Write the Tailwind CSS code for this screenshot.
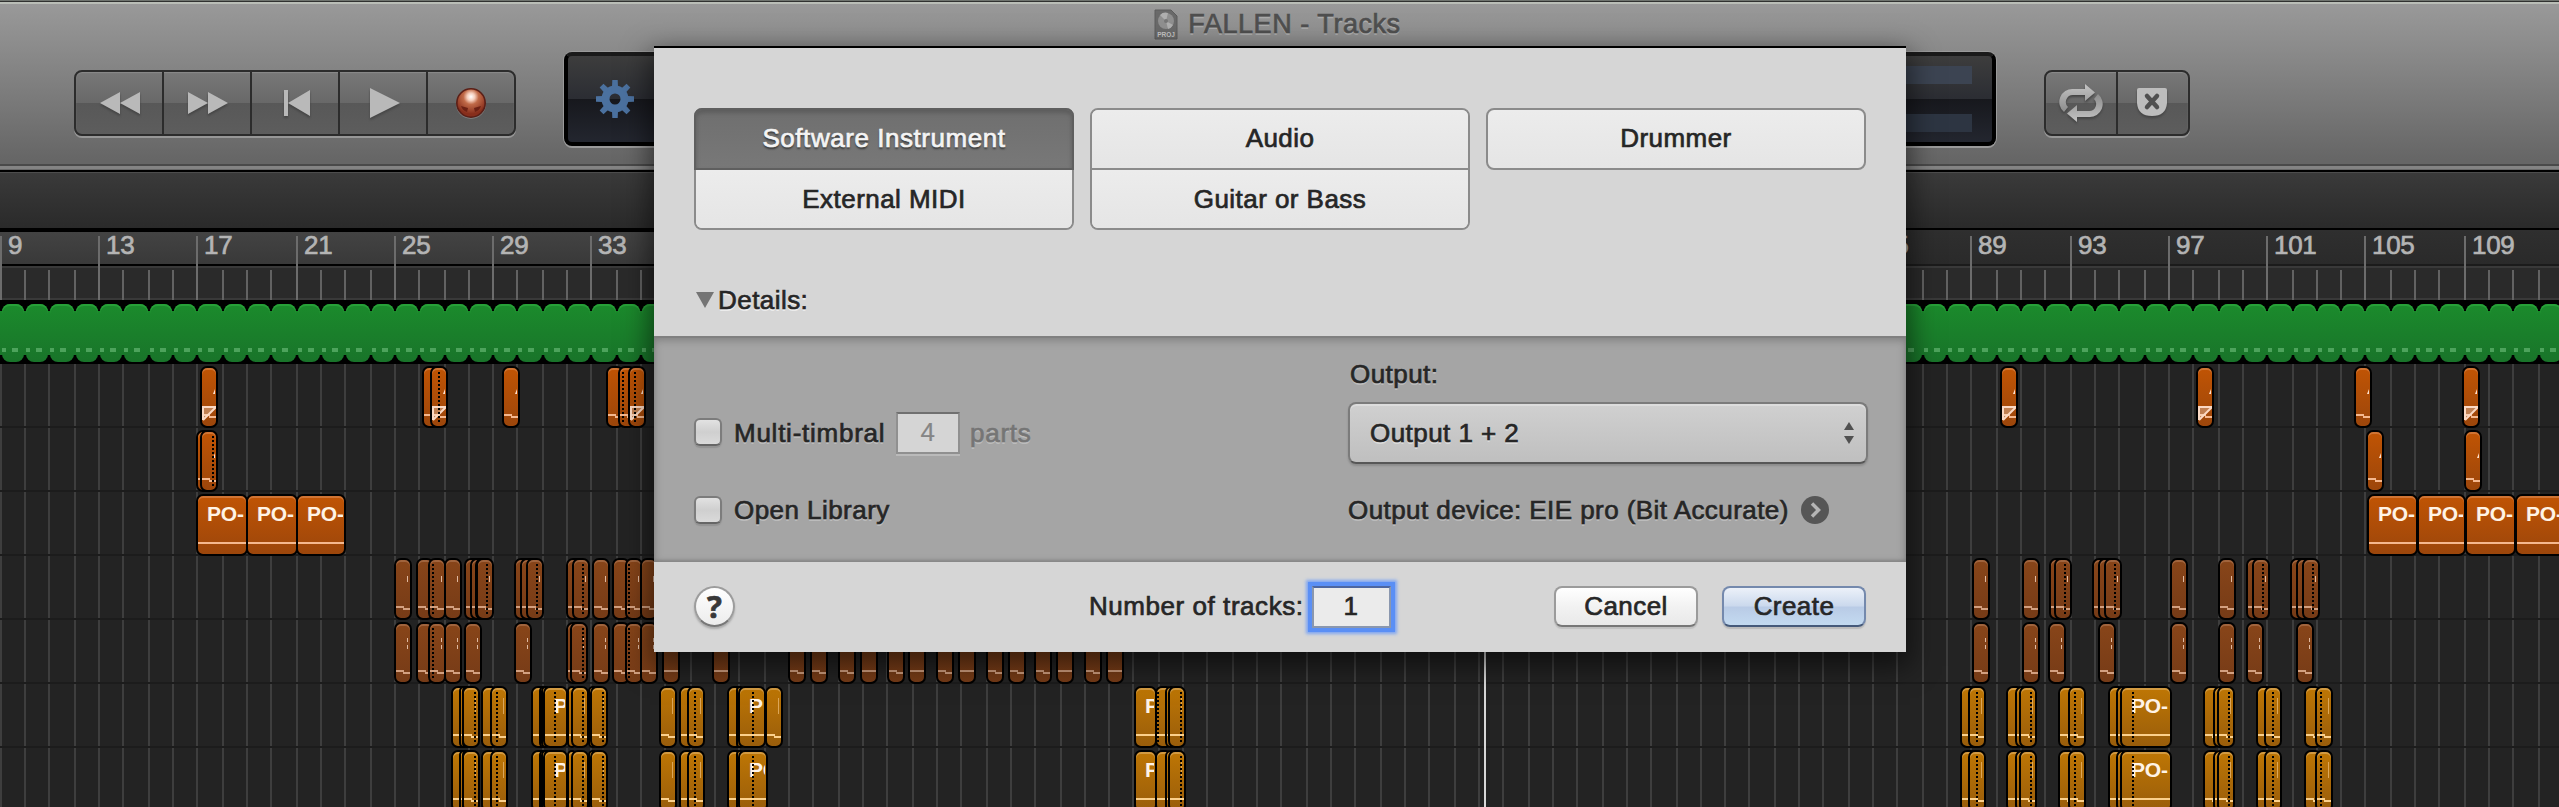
<!DOCTYPE html>
<html lang="en">
<head>
<meta charset="utf-8">
<title>FALLEN - Tracks</title>
<script src="https://cdn.jsdelivr.net/npm/@tailwindcss/browser@4"></script>
</head>
<body class="w-[2559px] h-[807px] overflow-hidden bg-[#232323]">
<div class="relative flex flex-col w-[2559px] h-[807px] overflow-hidden font-['Liberation_Sans',Arial,sans-serif] text-[26px] leading-none tracking-[0.45px] text-[#262626]">

  <!-- window header -->
  <header class="h-[172px] shrink-0 flex flex-col">
    <div class="h-[2px] bg-[linear-gradient(#8d938c,#111)]"></div>
    <div class="h-[162px] border-t-2 border-[#b9bdb6] bg-[linear-gradient(#999_0,#8b8b8b_44px,#666_155px)]">
      <div class="h-[26px] mt-[-1px] flex items-center justify-center gap-[10px] pr-[4px]">
        <svg class="w-[24px] h-[31px] mt-[16px]" viewBox="0 0 24 31">
          <path d="M1 1h16l6 6v23H1z" fill="#6a6a6a" stroke="#5c5c5c"/>
          <circle cx="12" cy="12" r="8" fill="#909090"/><path d="M12 12L6 6a8 8 0 0 1 8-2zM12 12l7 4a8 8 0 0 1-5 4z" fill="#b0b0b0"/><circle cx="12" cy="12" r="2" fill="#777"/>
          <text x="12" y="28" text-anchor="middle" font-size="6.5" font-weight="bold" letter-spacing="0" fill="#c4c4c4">PROJ</text>
        </svg>
        <span class="mt-[16px] text-[27px] tracking-[0.55px] text-[#4f4f4f] [-webkit-text-stroke:0.7px_#4f4f4f] [text-shadow:0_2px_0_#ababab]">FALLEN - Tracks</span>
      </div>
      <div class="flex items-start pl-[74px] pt-[23px]">
        <div class="mt-[18px] flex w-[442px] h-[66px] rounded-[8px] border-2 border-[#2c2c2c] bg-[linear-gradient(#787878,#686868_50%,#585858_50%,#5d5d5d)] shadow-[0_2px_0_#979797,inset_0_1px_1px_#8a8a8a]">
          <div class="w-[88px] flex items-center justify-center border-r-2 border-[#2c2c2c]">
            <svg class="w-[42px] h-[26px] ml-[2px] drop-shadow-[0_2px_1px_#444]" viewBox="0 0 42 26"><path d="M21 2v22L1 13zM41 2v22L21 13z" fill="#b9b9b9"/></svg>
          </div>
          <div class="w-[88px] flex items-center justify-center border-r-2 border-[#2c2c2c]">
            <svg class="w-[42px] h-[26px] ml-[2px] drop-shadow-[0_2px_1px_#444]" viewBox="0 0 42 26"><path d="M1 2v22l20-11zM21 2v22l20-11z" fill="#b9b9b9"/></svg>
          </div>
          <div class="w-[88px] flex items-center justify-center border-r-2 border-[#2c2c2c]">
            <svg class="w-[28px] h-[28px] ml-[4px] drop-shadow-[0_2px_1px_#444]" viewBox="0 0 28 28"><path d="M1 1h4v26H1zM27 1v26L5 14z" fill="#b9b9b9"/></svg>
          </div>
          <div class="w-[88px] flex items-center justify-center border-r-2 border-[#2c2c2c]">
            <svg class="w-[30px] h-[30px] ml-[4px] drop-shadow-[0_2px_1px_#444]" viewBox="0 0 30 30"><path d="M0 0v30l30-15z" fill="#b9b9b9"/></svg>
          </div>
          <div class="flex-1 flex items-center justify-center">
            <svg class="w-[32px] h-[32px]" viewBox="0 0 32 32">
              <defs><radialGradient id="rec" cx=".5" cy=".28" r=".6"><stop offset="0" stop-color="#fff"/><stop offset=".22" stop-color="#f5cdbb"/><stop offset=".45" stop-color="#c06a48"/><stop offset="1" stop-color="#872e1c"/></radialGradient></defs>
              <circle cx="16" cy="17" r="15" fill="#7d7d7d"/><circle cx="16" cy="16" r="14.2" fill="url(#rec)" stroke="#5a1f17" stroke-width="1.6"/>
              <path d="M6 19a10 9 0 0 0 6 6l1-4zM26 19a10 9 0 0 1-6 6l-1-4z" fill="#6c2114"/>
            </svg>
          </div>
        </div>
        <div class="ml-[48px] w-[1432px] h-[94px] rounded-[8px] border-4 border-black border-t-[#1a1a1a] bg-[linear-gradient(#3d3d3d,#2b2d33_50%,#17181d_50%,#23262f)] shadow-[0_0_0_1px_#9a9a9a,0_2px_0_#9a9a9a] flex justify-between">
          <svg class="w-[40px] h-[40px] ml-[27px] mt-[23px]" viewBox="-20 -20 40 40" fill="#4b719f">
            <path fill-rule="evenodd" d="M0-13.500A13.500 13.500 0 1 1 0 13.500A13.500 13.500 0 1 1 0-13.500zM0-5.500A5.500 5.500 0 1 0 0 5.500A5.500 5.500 0 1 0 0-5.500z"/>
            <g id="t"><path d="M-3-12l.3-7h5.400l.3 7zM-3 12l.3 7h5.400l.3-7zM-12-3l-7 .3v5.400l7 .3zM12-3l7 .3v5.400l-7 .3z"/></g><use href="#t" transform="rotate(45)"/>
          </svg>
          <div class="flex flex-col gap-[30px] mt-[10px] mr-[20px]">
            <div class="w-[110px] h-[18px] bg-[#3c4452]"></div>
            <div class="w-[110px] h-[18px] bg-[#2d3542]"></div>
          </div>
        </div>
        <div class="ml-[48px] mt-[18px] flex w-[146px] h-[66px] rounded-[8px] border-2 border-[#2c2c2c] bg-[linear-gradient(#787878,#686868_50%,#585858_50%,#5d5d5d)] shadow-[0_2px_0_#979797,inset_0_1px_1px_#8a8a8a]">
          <div class="w-[72px] flex items-center justify-center border-r-2 border-[#2c2c2c]">
            <svg class="w-[44px] h-[40px] drop-shadow-[0_2px_1px_#444]" viewBox="0 0 44 40">
              <defs><linearGradient id="a1" x1="0" y1="0" x2="0" y2="1"><stop offset="0" stop-color="#c4c4c4"/><stop offset="1" stop-color="#8c8c8c"/></linearGradient><linearGradient id="a2" x1="0" y1="0" x2="0" y2="1"><stop offset="0" stop-color="#8c8c8c"/><stop offset="1" stop-color="#c4c4c4"/></linearGradient></defs>
              <path d="M26 1v5H14A13 13 0 0 0 5 29l4-5A7 7 0 0 1 14 12h12v6l10-8.500z" fill="url(#a1)"/>
              <path d="M18 39v-5h12a13 13 0 0 0 9-23l-4 5a7 7 0 0 1-5 12H18v-6L8 30.500z" fill="url(#a2)"/>
            </svg>
          </div>
          <div class="flex-1 flex items-center justify-center pr-[2px]">
            <svg class="w-[32px] h-[30px] drop-shadow-[0_2px_1px_#444]" viewBox="0 0 32 30"><path d="M3 0h26q2 0 2 2v13q-1 13-15 13T1 15V2q0-2 2-2z" fill="#bdbdbd"/><path d="M11 8l10 11M21 8L11 19" stroke="#505050" stroke-width="4.500" stroke-linecap="round"/></svg>
          </div>
        </div>
      </div>
    </div>
    <div class="h-[2px] bg-[#4a4a4a]"></div>
    <div class="h-[4px] bg-[#848484] border-b border-[#6a6a6a]"></div>
    <div class="h-[2px] bg-black"></div>
  </header>

  <div class="h-[56px] shrink-0 border-t border-[#4d4d4d] bg-[linear-gradient(#3a3a3a,#2a2a2a)]"></div>

  <!-- bar ruler -->
  <section class="relative h-[76px] shrink-0 flex flex-col overflow-hidden">
    <div class="flex h-[38px]">
      <div class="w-[1280px] border-t-4 border-b-2 border-black bg-[linear-gradient(#434343,#393939)]"></div>
      <div class="flex-1 border-t-2 border-b-2 border-t-black border-b-[#1b1b1b] bg-[linear-gradient(#2f2f2f,#2a2a2a)]"></div>
    </div>
    <div class="h-[34px] bg-[#2a2a2a] border-t-2 border-b-2 border-[#393939]"></div>
    <div class="h-[4px] bg-black"></div>
    <div id="minor" class="absolute left-0 top-[42px] h-[30px] flex"></div>
    <div id="major" class="absolute left-0 top-[8px] h-[64px] flex text-[#b4b4b4]"></div>
  </section>

  <!-- arrange area -->
  <main id="area" class="relative flex-1 overflow-hidden bg-[#232323]">
    <div id="grid" class="absolute left-0 top-0 h-full flex"></div>
    <div id="seps" class="absolute left-0 top-[60px] w-full flex flex-col"></div>
    <div class="absolute left-0 top-0 w-full h-[60px] bg-black"></div>
    <div class="absolute left-0 top-0 w-full h-[58px] [clip-path:inset(7px_0)] bg-[linear-gradient(#1b8b2c,#19742a)]"></div>
    <div id="green" class="absolute left-0 top-0 h-[58px] flex"></div>
    <div class="absolute left-[1484px] top-0 w-[2px] h-full bg-[#d8d8d8]"></div>
  </main>

  <!-- new tracks dialog -->
  <div role="dialog" class="absolute left-[654px] top-[46px] w-[1252px] h-[606px] flex flex-col border-t-2 border-black bg-[#d6d6d6] shadow-[0_10px_26px_4px_rgba(0,0,0,0.55)] [-webkit-text-stroke:0.7px_currentColor]">
    <div class="h-[288px] shrink-0 pl-[40px] pt-[60px]">
      <div class="flex items-start gap-[16px]">
        <div class="w-[380px] h-[122px] rounded-[8px] border-2 border-[#8b8b8b] bg-[#e8e8e8] text-center">
          <div class="h-[62px] -mt-[2px] -mx-[2px] rounded-t-[8px] border-2 border-[#5f5f5f] bg-[linear-gradient(#6f6f6f,#787878)] shadow-[inset_0_3px_4px_#5c5c5c] leading-[57px] tracking-[0.55px] text-[#f4f4f4] [text-shadow:0_2px_2px_#333]">Software Instrument</div>
          <div class="h-[58px] rounded-b-[6px] bg-[linear-gradient(#ececec,#e5e5e5)] leading-[58px]">External MIDI</div>
        </div>
        <div class="w-[380px] h-[122px] rounded-[8px] border-2 border-[#8b8b8b] bg-[#e8e8e8] text-center">
          <div class="h-[60px] rounded-t-[6px] border-b-2 border-[#8b8b8b] bg-[linear-gradient(#ececec,#e5e5e5)] leading-[57px]">Audio</div>
          <div class="h-[58px] rounded-b-[6px] bg-[linear-gradient(#ececec,#e5e5e5)] leading-[58px]">Guitar or Bass</div>
        </div>
        <div class="w-[380px] h-[62px] rounded-[8px] border-2 border-[#8b8b8b] bg-[linear-gradient(#ececec,#e5e5e5)] text-center leading-[57px]">Drummer</div>
      </div>
      <div class="mt-[55px] flex items-center gap-[4px] pl-[2px] h-[30px]">
        <svg class="w-[18px] h-[16px]" viewBox="0 0 18 16"><path d="M0 0h18L9 16z" fill="#757575"/></svg>
        <span class="[text-shadow:0_2px_0_#ececec]">Details:</span>
      </div>
    </div>

    <div class="h-[226px] shrink-0 flex bg-[#a5a5a5] border-t-2 border-[#808080] shadow-[inset_0_2px_8px_#7d7d7d,inset_0_-2px_3px_#8a8a8a] pl-[40px] [text-shadow:0_2px_0_#bcbcbc]">
      <div class="w-[654px] flex flex-col pt-[74px]">
        <div class="flex items-center h-[42px]">
          <span class="size-[28px] -mt-[2px] rounded-[6px] border-2 border-[#7c7c7c] border-b-[#666] bg-[linear-gradient(#e2e2e2,#cfcfcf_50%,#dadada)] shadow-[0_2px_1px_#939393]"></span>
          <span class="ml-[12px] w-[154px] -mt-[1px] tracking-[0.75px]">Multi-timbral</span>
          <span class="ml-[8px] w-[64px] h-[42px] border-2 border-[#909090] border-t-[#707070] bg-[#d5d5d5] shadow-[0_2px_0_#bababa] text-center leading-[37px] text-[#858585] [text-shadow:none] [-webkit-text-stroke:0.2px_#858585]">4</span>
          <span class="ml-[10px] -mt-[1px] text-[#757575] tracking-[0.75px]">parts</span>
        </div>
        <div class="flex items-center h-[28px] mt-[42px]">
          <span class="size-[28px] rounded-[6px] border-2 border-[#7c7c7c] border-b-[#666] bg-[linear-gradient(#e2e2e2,#cfcfcf_50%,#dadada)] shadow-[0_2px_1px_#939393]"></span>
          <span class="ml-[12px]">Open Library</span>
        </div>
      </div>
      <div class="flex flex-col pt-[21px]">
        <div class="h-[30px] leading-[30px] pl-[2px]">Output:</div>
        <div class="mt-[13px] w-[520px] h-[62px] rounded-[8px] border-2 border-[#7b7b7b] border-b-[#575757] bg-[linear-gradient(#d0d0d0,#bfbfbf)] shadow-[0_2px_2px_#8c8c8c,inset_0_2px_0_#dcdcdc] flex items-center justify-between pl-[20px] pr-[12px] [text-shadow:0_2px_0_#dadada]">
          <span class="-mt-[1px]">Output 1 + 2</span>
          <svg class="w-[10px] h-[22px]" viewBox="0 0 10 22"><path d="M0 8h10L5 0zM0 14h10l-5 8z" fill="#505050"/></svg>
        </div>
        <div class="flex items-center h-[28px] mt-[32px]">
          <span class="tracking-[0.43px]">Output device: EIE pro (Bit Accurate)</span>
          <svg class="ml-[12px] w-[28px] h-[28px]" viewBox="0 0 28 28"><circle cx="14" cy="14" r="14" fill="#565656"/><path d="M11 7.500l6.500 6.500-6.500 6.500" fill="none" stroke="#b5b5b5" stroke-width="3.500"/></svg>
        </div>
      </div>
    </div>

    <div class="flex-1 flex items-start pl-[40px] pr-[40px] pt-[24px]">
      <span class="size-[41px] rounded-full border-2 border-[#9c9c9c] border-b-[#777] bg-[linear-gradient(#fff,#ececec)] shadow-[0_2px_2px_#aaa] text-center font-['Noto_Sans',sans-serif] font-bold text-[31px] leading-[37px] text-[#383838]">?</span>
      <span class="ml-[354px] h-[41px] leading-[40px] tracking-[0.55px]">Number of tracks:</span>
      <span class="ml-[8px] w-[79px] h-[42px] border-2 border-[#8a97ae] border-t-[#4d66a0] bg-[#ebebeb] shadow-[0_0_0_4px_#5a8ff5,0_0_3px_6px_#7fa6f2] text-center leading-[37px]">1</span>
      <span class="ml-auto w-[144px] h-[41px] rounded-[8px] border-2 border-[#9b9b9b] border-b-[#777] bg-[linear-gradient(#fff,#f2f2f2_50%,#e9e9e9)] shadow-[0_2px_1px_#c0c0c0] text-center leading-[37px]">Cancel</span>
      <span class="ml-[24px] w-[144px] h-[41px] rounded-[8px] border-2 border-[#7489ad] border-b-[#465a7a] bg-[linear-gradient(#ecf1f9,#cbd9ed_48%,#b9cbe6_52%,#c3daf0)] shadow-[0_2px_1px_#bbb] text-center leading-[37px]">Create</span>
    </div>
  </div>
</div>

<script>
const lineX = i => Math.floor((i * 24.64 + 0.5) / 2) * 2;
const $ = id => document.getElementById(id);
let minor = '', major = '', grid = '', green = '';
for (let i = 0; i < 104; i++) {
  const w = lineX(i + 1) - lineX(i);
  minor += `<div class="shrink-0 border-l-2 border-[#626262]" style="width:${w}px"></div>`;
  grid += `<div class="shrink-0 border-l-2 border-[#3e3e3e]" style="width:${w}px"></div>`;
  green += `<div class="relative shrink-0 h-[58px]" style="width:${w}px"><div class="h-full ml-[2px] rounded-[8px] bg-[linear-gradient(#1b8b2c,#19742a)] shadow-[inset_0_2px_0_#27a038]"></div><div class="absolute left-[2px] top-[44px] w-[4px] h-[4px] bg-[#4da35c]"></div><div class="absolute left-[12px] top-[44px] w-[6px] h-[4px] bg-[#4da35c]"></div></div>`;
}
for (let i = 0; i < 104; i += 4)
  major += `<div class="shrink-0 border-l-2 border-[#6c6c6c] pl-[6px] leading-[18px] tracking-[-0.3px] [-webkit-text-stroke:0.7px_#b4b4b4]" style="width:${lineX(i + 4) - lineX(i)}px">${i + 9}</div>`;
$('minor').innerHTML = minor; $('major').innerHTML = major; $('grid').innerHTML = grid; $('green').innerHTML = green;
$('seps').innerHTML = '<div class="h-[64px] border-b-2 border-[#1c1c1c]"></div>'.repeat(7) ;

// regions: [x, width, loop mark x, note line]  note line: 's' stepped, 'f' flat, 'z' faded, 'p' named
const gold = last => [
  [451,18],[459,10],[462,10],[462,18,475],[481,18],[490,18,497],
  [531,18],[539,10],[541,10],[543,25,555,'p'],[567,10],[571,18,583],[588,10],[590,18,603],
  [659,18],[679,18],[687,18,695],
  [727,18],[736,8],[738,last ? 30 : 28,753,'p'],...(last ? [] : [[765,18]]),
  [1134,23,0,'p'],[1155,18,last ? 0 : 1158,'f'],[1165,12,0,'f'],[1168,18,1181,'f'],
  [1960,18],[1968,18,1977],[2006,18],[2015,14],[2019,18,2031],[2058,18],[2068,18,2075],
  [2108,18],[2116,14],[2120,52,2133,'p'],[2203,18],[2213,14],[2217,18,2229],
  [2256,18],[2264,18,2273],[2304,18],[2315,18,2321]];
const rows = [
  ['o', [[200,18,0,'z'],[422,18],[430,18,439,'z'],[502,18],[606,18],[618,18,623],[628,18,635,'z'],[2000,18,0,'z'],[2196,18,0,'z'],[2354,18],[2462,18,0,'z']]],
  ['o', [[196,18],[200,18,213],[2366,18],[2464,18]]],
  ['o', [[196,52,0,'p'],[246,52,0,'p'],[296,50,0,'p'],[2367,51,0,'p'],[2417,49,0,'p'],[2465,51,0,'p'],[2515,51,0,'p']]],
  ['b', [[394,18],[416,18],[428,18,433],[444,18],[464,18],[470,18],[475,18],[476,18,487],[514,18],[520,18],[526,18,537],[566,18],[572,18,583],[592,18],[612,18],[625,18,629],[640,18],
    [1972,18],[2022,18],[2049,18],[2054,18,2065],[2092,18],[2098,18],[2104,18,2115],[2170,18],[2218,18],[2246,18],[2252,18,2263],[2290,18],[2296,18],[2302,18,2313]]],
  ['c', [[394,18],[416,18],[428,18,433],[444,18],[464,18],[514,18],[566,18],[570,18,583],[592,18],[612,18],[625,18,629],[640,18],[662,18,0,'f'],[712,18,0,'f'],
    [788,18],[810,18],[838,18],[860,18,0,'f'],[887,18],[908,18,0,'f'],[936,18],[958,18,0,'f'],[986,18],[1008,18],[1034,18],[1056,18,0,'f'],[1084,18],[1106,18,0,'f'],
    [1972,18],[2022,18],[2048,18],[2098,18],[2170,18],[2218,18],[2246,18],[2296,18]]],
  ['g', gold(false)],
  ['g', gold(true)]
];
const skin = {
  o: ['bg-[linear-gradient(#c05404,#9c460b)] shadow-[inset_0_2px_0_#cf7434]', 'bg-[#f5b88f]'],
  b: ['bg-[linear-gradient(#884519,#763b17)] shadow-[inset_0_2px_0_#a0643d]', 'bg-[#d3a080]'],
  c: ['bg-[linear-gradient(#884519,#763b17)] shadow-[inset_0_2px_0_#a0643d]', 'bg-[#d3a080]'],
  g: ['bg-[linear-gradient(#be7604,#995d0b)] shadow-[inset_0_2px_0_#d29a41]', 'bg-[#fbd08c]']
};
let out = '';
rows.forEach(([kind, list], r) => list.forEach(([x, w, dot, note = 's']) => {
  const [fill, line] = skin[kind];
  const narrow = note !== 'p';
  let inner = narrow && note !== 'f'
    ? `<div class="absolute left-0 top-[46px] w-[8px] h-[2px] ${line}"></div><div class="absolute left-[7px] right-0 top-[48px] h-[2px] ${line}"></div>`
    : `<div class="absolute left-0 right-0 top-[46px] h-[2px] ${line}"></div>`;
  if (note === 'p') inner += `<div class="absolute left-[9px] right-[1px] top-[7px] h-[22px] overflow-hidden whitespace-nowrap text-[21px] font-bold leading-[22px] tracking-[-0.2px] text-[#fff3e6]">PO-</div>`;
  if (note === 'z') inner += `<svg class="absolute left-0 top-[38px] w-[14px] h-[15px]" viewBox="0 0 14 15"><path d="M0 0h14L0 14z" fill="#fff" fill-opacity=".3"/><path d="M1 14V1h13L1 14" fill="none" stroke="#fbd9c4" stroke-width="2"/></svg>`;
  if (narrow && w > 14) {
    if (kind === 'o') inner += `<svg class="absolute right-[1px] top-[21px] w-[2px] h-[5px]" viewBox="0 0 2 5"><path d="M2 0v5H0z" fill="#ffe0cc"/></svg>`;
    if (kind === 'b') inner += `<div class="absolute right-[2px] top-[16px] w-[1px] h-[6px] bg-[#e0b9a0]"></div>`;
    if (kind === 'c') inner += `<div class="absolute right-[2px] top-[14px] w-[1px] h-[4px] bg-[#e0b9a0]"></div><div class="absolute right-[2px] top-[21px] w-[1px] h-[4px] bg-[#e0b9a0]"></div>`;
    if (kind === 'g') inner += `<div class="absolute right-[2px] top-[10px] w-[1px] h-[16px] bg-[#dca658]"></div>`;
  }
  if (dot) inner += `<div class="absolute top-[4px] bottom-[2px] w-[2px] bg-[repeating-linear-gradient(#000_0_2px,transparent_2px_4px)]" style="left:${dot - x - 3}px"></div>`;
  out += `<div class="absolute h-[62px] rounded-[7px] border-2 border-black overflow-hidden ${fill}" style="left:${x}px;top:${62 + r * 64}px;width:${w}px">${inner}</div>`;
}));
$('area').insertAdjacentHTML('beforeend', out);
</script>
</body>
</html>
